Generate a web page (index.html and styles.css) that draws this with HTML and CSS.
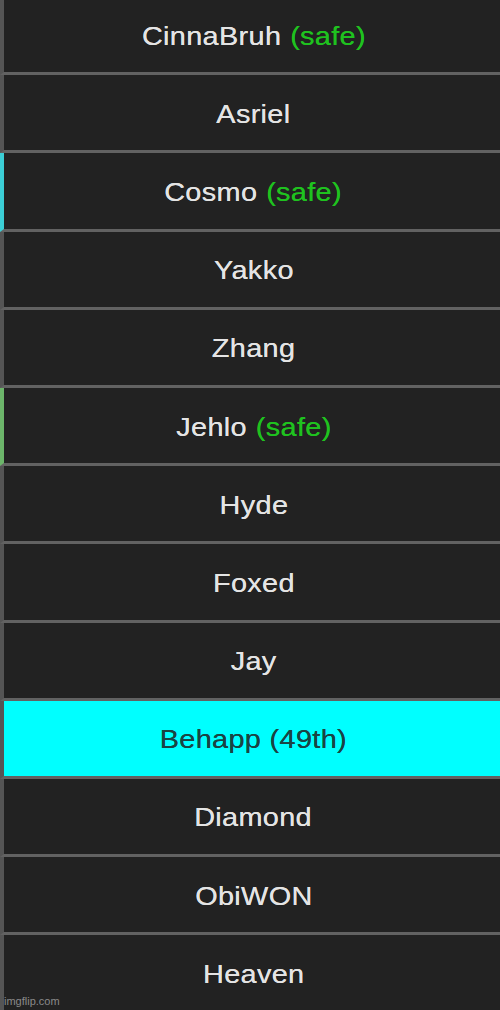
FILE: index.html
```html
<!DOCTYPE html>
<html>
<head>
<meta charset="utf-8">
<link rel="stylesheet" href="styles.css">
</head>
<body>
<div class="list">
  <div class="row"><span class="label"><span class="name">CinnaBruh</span><span class="safe">(safe)</span></span></div>
  <div class="row"><span class="label"><span class="name">Asriel</span></span></div>
  <div class="row row-cyan"><span class="label"><span class="name">Cosmo</span><span class="safe">(safe)</span></span></div>
  <div class="row"><span class="label"><span class="name">Yakko</span></span></div>
  <div class="row"><span class="label"><span class="name">Zhang</span></span></div>
  <div class="row row-green"><span class="label"><span class="name">Jehlo</span><span class="safe">(safe)</span></span></div>
  <div class="row"><span class="label"><span class="name">Hyde</span></span></div>
  <div class="row"><span class="label"><span class="name">Foxed</span></span></div>
  <div class="row"><span class="label"><span class="name">Jay</span></span></div>
  <div class="row row-out"><span class="label"><span class="name">Behapp (49th)</span></span></div>
  <div class="row"><span class="label"><span class="name">Diamond</span></span></div>
  <div class="row"><span class="label"><span class="name">ObiWON</span></span></div>
  <div class="row"><span class="label"><span class="name">Heaven</span></span></div>
</div>
<div class="watermark">imgflip.com</div>
</body>
</html>
```
FILE: styles.css
```css
html, body {
  margin: 0;
  padding: 0;
  background: #222222;
  width: 500px;
  height: 1010px;
  overflow: hidden;
  position: relative;
}

.list {
  margin-top: -3px;
  display: flex;
  flex-direction: column;
}

.row {
  height: 75.2px;
  box-sizing: content-box;
  border-left: 4px solid #555555;
  border-bottom: 3px solid #626262;
  display: flex;
  align-items: center;
  justify-content: center;
  padding-left: 3px;
  font-family: "Liberation Sans", Arial, sans-serif;
  font-size: 26px;
  letter-spacing: 0.3px;
  color: #e4e4e4;
  background: #222222;
}

.label {
  display: inline-flex;
  gap: 8px;
  padding-top: 3px;
  transform: scaleX(1.11);
  text-shadow: 0 0 0.6px currentColor;
}

.safe {
  color: #1fc21f;
}

.row-cyan {
  border-left-color: #3ccfd6;
}

.row-green {
  border-left-color: #6cb56a;
}

.row-out {
  background: #00ffff;
  color: #1a4444;
}

.watermark {
  position: absolute;
  left: 4px;
  bottom: 3px;
  font-family: "Liberation Sans", Arial, sans-serif;
  font-size: 11px;
  color: #8a8a8a;
}
```
